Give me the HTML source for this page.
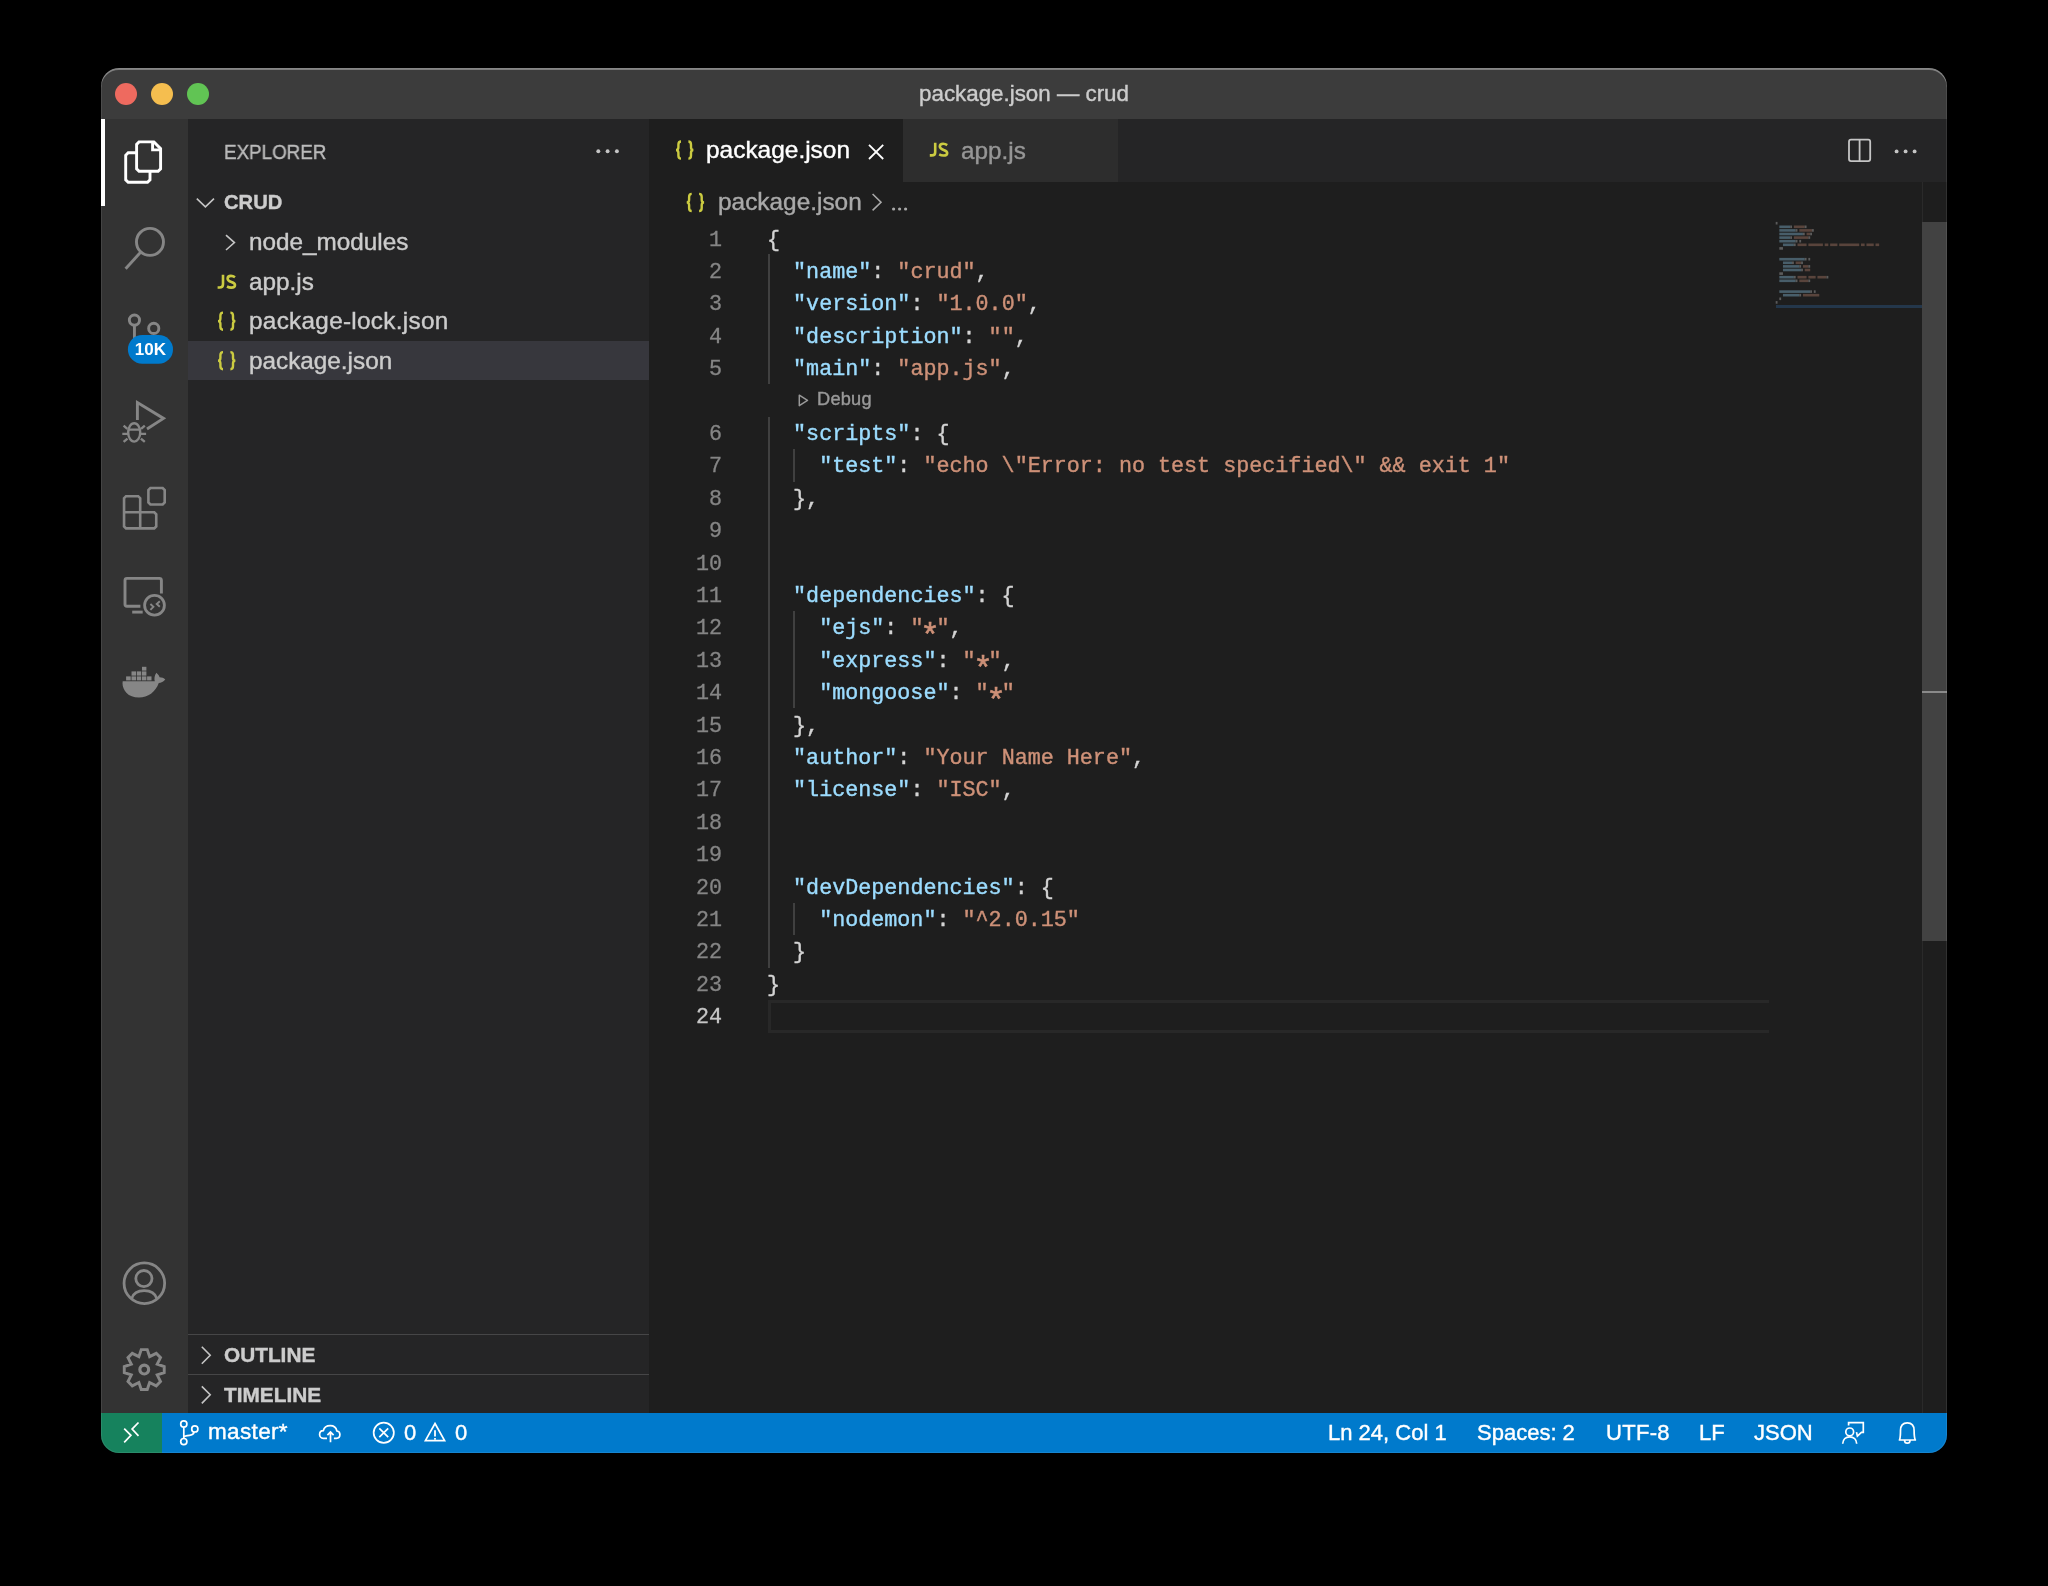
<!DOCTYPE html>
<html><head><meta charset="utf-8">
<style>
html,body{margin:0;padding:0;background:#000;}
body{width:2048px;height:1586px;position:relative;overflow:hidden;font-family:"Liberation Sans",sans-serif;}
#win{position:absolute;left:0;top:0;width:2048px;height:1586px;clip-path:inset(68px 101px 133px 101px round 18px);background:#1e1e1e;}
.a{position:absolute;white-space:pre;will-change:transform;-webkit-text-stroke:0.4px currentColor;}
.r{position:absolute;}
svg.ic{position:absolute;left:0;top:0;width:2048px;height:1586px;overflow:visible;}
.ln{position:absolute;will-change:transform;-webkit-text-stroke:0.3px currentColor;left:622px;width:100px;text-align:right;font-family:"Liberation Mono",monospace;font-size:21.72px;line-height:32.4px;color:#858585;white-space:pre;}
.ln.cur{color:#c6c6c6;}
.cl{position:absolute;will-change:transform;-webkit-text-stroke:0.4px currentColor;left:767.3px;font-family:"Liberation Mono",monospace;font-size:21.72px;line-height:32.4px;color:#d4d4d4;white-space:pre;}
.k{color:#9cdcfe;}
.ast{display:inline-block;width:13.03px;transform-origin:50% 8.7px;transform:translate(0.6px,6px) scale(1.5);}
.s{color:#ce9178;}
.side{font-size:24.3px;line-height:24.3px;color:#cccccc;}
.stat{font-size:22px;line-height:22px;color:#ffffff;}
</style></head>
<body>
<div id="win">
  <!-- title bar -->
  <div class="r" style="left:101px;top:68px;width:1846px;height:51px;background:#3c3c3c;"></div>
  
  <div class="r" style="left:115px;top:83px;width:22px;height:22px;border-radius:50%;background:#ee6a5f;"></div>
  <div class="r" style="left:151px;top:83px;width:22px;height:22px;border-radius:50%;background:#f5be4f;"></div>
  <div class="r" style="left:187px;top:83px;width:22px;height:22px;border-radius:50%;background:#61c454;"></div>
  <div class="a" style="left:0;width:2048px;text-align:center;top:83.0px;font-size:22.35px;line-height:22.35px;color:#cccccc;">package.json — crud</div>

  <!-- activity bar -->
  <div class="r" style="left:101px;top:119px;width:87px;height:1294px;background:#333333;"></div>
  <div class="r" style="left:101px;top:119px;width:4px;height:87px;background:#ffffff;"></div>

  <!-- sidebar -->
  <div class="r" style="left:188px;top:119px;width:461px;height:1294px;background:#252526;"></div>
  <div class="r" style="left:188px;top:340.5px;width:461px;height:39px;background:#37373d;"></div>
  <div class="a" style="left:224.3px;top:141.9px;font-size:20.5px;line-height:20.5px;color:#bbbbbb;transform:scaleX(0.917);transform-origin:0 0;">EXPLORER</div>
  <div class="a" style="left:223.9px;top:191.8px;font-size:20.2px;line-height:20.2px;color:#cccccc;font-weight:bold;">CRUD</div>
  <div class="a side" style="left:249px;top:230.1px;">node_modules</div>
  <div class="a side" style="left:249px;top:269.7px;">app.js</div>
  <div class="a side" style="left:249px;top:309.4px;letter-spacing:0.3px;">package-lock.json</div>
  <div class="a side" style="left:249px;top:348.7px;">package.json</div>
  <div class="r" style="left:188px;top:1333.9px;width:461px;height:1.5px;background:#464647;"></div>
  <div class="r" style="left:188px;top:1373.6px;width:461px;height:1.5px;background:#464647;"></div>
  <div class="a" style="left:223.6px;top:1345.3px;font-size:20.8px;line-height:20.8px;color:#cccccc;font-weight:bold;">OUTLINE</div>
  <div class="a" style="left:224.3px;top:1384.6px;font-size:20.8px;line-height:20.8px;color:#cccccc;font-weight:bold;">TIMELINE</div>

  <!-- editor tab bar -->
  <div class="r" style="left:649px;top:119px;width:1298px;height:63px;background:#252526;"></div>
  <div class="r" style="left:649px;top:119px;width:253.8px;height:63px;background:#1e1e1e;"></div>
  <div class="r" style="left:902.8px;top:119px;width:215px;height:63px;background:#2d2d2d;"></div>
  <div class="a" style="left:706.3px;top:137.9px;font-size:24.45px;line-height:24.45px;color:#ffffff;">package.json</div>
  <div class="a" style="left:961px;top:138.6px;font-size:24.3px;line-height:24.3px;color:#969696;">app.js</div>
  <!-- breadcrumbs -->
  <div class="a" style="left:717.6px;top:190.3px;font-size:24.4px;line-height:24.4px;color:#a9a9a9;">package.json</div>

  <!-- code -->
<div class="ln" style="top:224.5px">1</div>
<div class="cl" style="top:224.5px">{</div>
<div class="ln" style="top:256.9px">2</div>
<div class="cl" style="top:256.9px">  <span class="k">"name"</span>: <span class="s">"crud"</span>,</div>
<div class="ln" style="top:289.3px">3</div>
<div class="cl" style="top:289.3px">  <span class="k">"version"</span>: <span class="s">"1.0.0"</span>,</div>
<div class="ln" style="top:321.7px">4</div>
<div class="cl" style="top:321.7px">  <span class="k">"description"</span>: <span class="s">""</span>,</div>
<div class="ln" style="top:354.1px">5</div>
<div class="cl" style="top:354.1px">  <span class="k">"main"</span>: <span class="s">"app.js"</span>,</div>
<div class="ln" style="top:418.9px">6</div>
<div class="cl" style="top:418.9px">  <span class="k">"scripts"</span>: {</div>
<div class="ln" style="top:451.3px">7</div>
<div class="cl" style="top:451.3px">    <span class="k">"test"</span>: <span class="s">"echo \"Error: no test specified\" &amp;&amp; exit 1"</span></div>
<div class="ln" style="top:483.7px">8</div>
<div class="cl" style="top:483.7px">  },</div>
<div class="ln" style="top:516.1px">9</div>
<div class="ln" style="top:548.5px">10</div>
<div class="ln" style="top:580.9px">11</div>
<div class="cl" style="top:580.9px">  <span class="k">"dependencies"</span>: {</div>
<div class="ln" style="top:613.3px">12</div>
<div class="cl" style="top:613.3px">    <span class="k">"ejs"</span>: <span class="s">"<span class="ast">*</span>"</span>,</div>
<div class="ln" style="top:645.7px">13</div>
<div class="cl" style="top:645.7px">    <span class="k">"express"</span>: <span class="s">"<span class="ast">*</span>"</span>,</div>
<div class="ln" style="top:678.1px">14</div>
<div class="cl" style="top:678.1px">    <span class="k">"mongoose"</span>: <span class="s">"<span class="ast">*</span>"</span></div>
<div class="ln" style="top:710.5px">15</div>
<div class="cl" style="top:710.5px">  },</div>
<div class="ln" style="top:742.9px">16</div>
<div class="cl" style="top:742.9px">  <span class="k">"author"</span>: <span class="s">"Your Name Here"</span>,</div>
<div class="ln" style="top:775.3px">17</div>
<div class="cl" style="top:775.3px">  <span class="k">"license"</span>: <span class="s">"ISC"</span>,</div>
<div class="ln" style="top:807.7px">18</div>
<div class="ln" style="top:840.1px">19</div>
<div class="ln" style="top:872.5px">20</div>
<div class="cl" style="top:872.5px">  <span class="k">"devDependencies"</span>: {</div>
<div class="ln" style="top:904.9px">21</div>
<div class="cl" style="top:904.9px">    <span class="k">"nodemon"</span>: <span class="s">"^2.0.15"</span></div>
<div class="ln" style="top:937.3px">22</div>
<div class="cl" style="top:937.3px">  }</div>
<div class="ln" style="top:969.7px">23</div>
<div class="cl" style="top:969.7px">}</div>
<div class="ln cur" style="top:1002.1px">24</div>

  <div class="a" style="left:817px;top:390.1px;font-size:18.2px;line-height:18.2px;color:#999999;letter-spacing:0.25px;">Debug</div>
  <!-- current line -->
  <div class="r" style="left:768px;top:1000.4px;width:1000.6px;height:32.4px;border:3px solid #282828;border-right:0;box-sizing:border-box;"></div>
  <!-- indent guides -->
  <div class="r" style="left:768px;top:254.2px;width:2px;height:130.3px;background:#404040;"></div>
  <div class="r" style="left:768px;top:416.9px;width:2px;height:550.8px;background:#404040;"></div>
  <div class="r" style="left:793px;top:449.3px;width:2px;height:32.4px;background:#404040;"></div>
  <div class="r" style="left:793px;top:611.3px;width:2px;height:97.2px;background:#404040;"></div>
  <div class="r" style="left:793px;top:902.9px;width:2px;height:32.4px;background:#404040;"></div>

  <!-- minimap -->
  <div class="r" style="left:1775.7px;top:304.8px;width:146.3px;height:3.4px;background:#24374b;"></div>
<svg class="ic" viewBox="0 0 2048 1586" style="opacity:0.34"><rect x="1775.70" y="221.90" width="1.81" height="2.6" fill="#d4d4d4"/><rect x="1779.33" y="225.50" width="10.89" height="2.6" fill="#9cdcfe"/><rect x="1790.22" y="225.50" width="1.81" height="2.6" fill="#d4d4d4"/><rect x="1793.85" y="225.50" width="10.89" height="2.6" fill="#ce9178"/><rect x="1804.74" y="225.50" width="1.81" height="2.6" fill="#d4d4d4"/><rect x="1779.33" y="229.10" width="16.34" height="2.6" fill="#9cdcfe"/><rect x="1795.66" y="229.10" width="1.81" height="2.6" fill="#d4d4d4"/><rect x="1799.30" y="229.10" width="12.71" height="2.6" fill="#ce9178"/><rect x="1812.00" y="229.10" width="1.81" height="2.6" fill="#d4d4d4"/><rect x="1779.33" y="232.70" width="23.59" height="2.6" fill="#9cdcfe"/><rect x="1802.92" y="232.70" width="1.81" height="2.6" fill="#d4d4d4"/><rect x="1806.56" y="232.70" width="3.63" height="2.6" fill="#ce9178"/><rect x="1810.18" y="232.70" width="1.81" height="2.6" fill="#d4d4d4"/><rect x="1779.33" y="236.30" width="10.89" height="2.6" fill="#9cdcfe"/><rect x="1790.22" y="236.30" width="1.81" height="2.6" fill="#d4d4d4"/><rect x="1793.85" y="236.30" width="14.52" height="2.6" fill="#ce9178"/><rect x="1808.37" y="236.30" width="1.81" height="2.6" fill="#d4d4d4"/><rect x="1779.33" y="239.90" width="16.34" height="2.6" fill="#9cdcfe"/><rect x="1795.66" y="239.90" width="1.81" height="2.6" fill="#d4d4d4"/><rect x="1799.30" y="239.90" width="1.81" height="2.6" fill="#d4d4d4"/><rect x="1782.96" y="243.50" width="10.89" height="2.6" fill="#9cdcfe"/><rect x="1793.85" y="243.50" width="1.81" height="2.6" fill="#d4d4d4"/><rect x="1797.48" y="243.50" width="9.07" height="2.6" fill="#ce9178"/><rect x="1808.37" y="243.50" width="14.52" height="2.6" fill="#ce9178"/><rect x="1824.70" y="243.50" width="3.63" height="2.6" fill="#ce9178"/><rect x="1830.15" y="243.50" width="7.26" height="2.6" fill="#ce9178"/><rect x="1839.23" y="243.50" width="19.96" height="2.6" fill="#ce9178"/><rect x="1861.01" y="243.50" width="3.63" height="2.6" fill="#ce9178"/><rect x="1866.45" y="243.50" width="7.26" height="2.6" fill="#ce9178"/><rect x="1875.53" y="243.50" width="3.63" height="2.6" fill="#ce9178"/><rect x="1779.33" y="247.10" width="3.63" height="2.6" fill="#d4d4d4"/><rect x="1779.33" y="257.90" width="25.41" height="2.6" fill="#9cdcfe"/><rect x="1804.74" y="257.90" width="1.81" height="2.6" fill="#d4d4d4"/><rect x="1808.37" y="257.90" width="1.81" height="2.6" fill="#d4d4d4"/><rect x="1782.96" y="261.50" width="9.07" height="2.6" fill="#9cdcfe"/><rect x="1792.04" y="261.50" width="1.81" height="2.6" fill="#d4d4d4"/><rect x="1795.66" y="261.50" width="5.45" height="2.6" fill="#ce9178"/><rect x="1801.11" y="261.50" width="1.81" height="2.6" fill="#d4d4d4"/><rect x="1782.96" y="265.10" width="16.34" height="2.6" fill="#9cdcfe"/><rect x="1799.30" y="265.10" width="1.81" height="2.6" fill="#d4d4d4"/><rect x="1802.92" y="265.10" width="5.45" height="2.6" fill="#ce9178"/><rect x="1808.37" y="265.10" width="1.81" height="2.6" fill="#d4d4d4"/><rect x="1782.96" y="268.70" width="18.15" height="2.6" fill="#9cdcfe"/><rect x="1801.11" y="268.70" width="1.81" height="2.6" fill="#d4d4d4"/><rect x="1804.74" y="268.70" width="5.45" height="2.6" fill="#ce9178"/><rect x="1779.33" y="272.30" width="3.63" height="2.6" fill="#d4d4d4"/><rect x="1779.33" y="275.90" width="14.52" height="2.6" fill="#9cdcfe"/><rect x="1793.85" y="275.90" width="1.81" height="2.6" fill="#d4d4d4"/><rect x="1797.48" y="275.90" width="9.07" height="2.6" fill="#ce9178"/><rect x="1808.37" y="275.90" width="7.26" height="2.6" fill="#ce9178"/><rect x="1817.44" y="275.90" width="9.07" height="2.6" fill="#ce9178"/><rect x="1826.52" y="275.90" width="1.81" height="2.6" fill="#d4d4d4"/><rect x="1779.33" y="279.50" width="16.34" height="2.6" fill="#9cdcfe"/><rect x="1795.66" y="279.50" width="1.81" height="2.6" fill="#d4d4d4"/><rect x="1799.30" y="279.50" width="9.07" height="2.6" fill="#ce9178"/><rect x="1808.37" y="279.50" width="1.81" height="2.6" fill="#d4d4d4"/><rect x="1779.33" y="290.30" width="30.86" height="2.6" fill="#9cdcfe"/><rect x="1810.18" y="290.30" width="1.81" height="2.6" fill="#d4d4d4"/><rect x="1813.82" y="290.30" width="1.81" height="2.6" fill="#d4d4d4"/><rect x="1782.96" y="293.90" width="16.34" height="2.6" fill="#9cdcfe"/><rect x="1799.30" y="293.90" width="1.81" height="2.6" fill="#d4d4d4"/><rect x="1802.92" y="293.90" width="16.34" height="2.6" fill="#ce9178"/><rect x="1779.33" y="297.50" width="1.81" height="2.6" fill="#d4d4d4"/><rect x="1775.70" y="301.10" width="1.81" height="2.6" fill="#d4d4d4"/></svg>

  <!-- scrollbar -->
  <div class="r" style="left:1922px;top:182px;width:25px;height:1231px;background:#1e1e1e;border-left:1px solid #2a2a2a;box-sizing:border-box;"></div>
  <div class="r" style="left:1922px;top:222px;width:25px;height:718.5px;background:#424242;"></div>
  <div class="r" style="left:1922px;top:690.5px;width:25px;height:2.2px;background:#8a8a8a;"></div>

  <!-- status bar -->
  <div class="r" style="left:101px;top:1413px;width:1846px;height:40px;background:#007acc;"></div>
  <div class="r" style="left:101px;top:1413px;width:61px;height:40px;background:#16825d;"></div>
  <div class="a stat" style="left:207.8px;top:1421.2px;font-size:22.5px;letter-spacing:0.35px;">master*</div>
  <div class="a stat" style="left:403.5px;top:1422.1px;">0</div>
  <div class="a stat" style="left:454.9px;top:1422.1px;">0</div>
  <div class="a stat" style="left:1328.1px;top:1422.4px;">Ln 24, Col 1</div>
  <div class="a stat" style="left:1476.6px;top:1422.4px;">Spaces: 2</div>
  <div class="a stat" style="left:1606.0px;top:1422.4px;letter-spacing:0.3px;">UTF-8</div>
  <div class="a stat" style="left:1699.3px;top:1422.4px;">LF</div>
  <div class="a stat" style="left:1753.8px;top:1422.4px;">JSON</div>

  <!-- icons -->
  <svg class="ic" viewBox="0 0 2048 1586" fill="none" stroke-linecap="butt" stroke-linejoin="miter">
    <defs>
      <path id="brace" d="M223,312.6 C220.9,312.6 220.4,313.8 220.4,315.8 V318.4 C220.4,320.2 219.7,321.1 218,321.1 C219.7,321.1 220.4,322 220.4,323.8 V326.6 C220.4,328.6 220.9,329.7 223,329.7 M230.4,312.6 C232.5,312.6 233,313.8 233,315.8 V318.4 C233,320.2 233.7,321.1 235.4,321.1 C233.7,321.1 233,322 233,323.8 V326.6 C233,328.6 232.5,329.7 230.4,329.7" stroke="#cbcb41" stroke-width="2.4" fill="none"/>
      <path id="js" d="M223,274.8 V284.3 C223,286.8 221.6,287.5 219.6,287.5 H217.6 M235,277.2 C233.6,276.2 232.2,275.9 230.9,275.9 C228.6,275.9 227.6,277.2 227.6,278.7 C227.6,280.6 229.4,281.3 231.4,282 C233.7,282.8 235,283.7 235,285 C235,286.8 233.4,287.6 231.2,287.6 C229.7,287.6 228.3,287.2 227,286.5" stroke="#cbcb41" stroke-width="2.6" fill="none"/>
    </defs>
    <!-- explorer files (active, white) -->
    <g stroke="#ffffff" stroke-width="2.9">
      <path d="M139,141.9 H153.9 L160.6,148.6 V168.8 L158.1,171.3 H139.1 L136.6,168.8 V144.4 Z"/>
      <path d="M152.6,141.9 V149.9 H160.6"/>
      <path d="M136.6,152.8 H128.2 L125.7,155.3 V179.8 L128.2,182.3 H147.5 L150,179.8 V171.3"/>
    </g>
    <!-- inactive icons -->
    <g stroke="#868686" stroke-width="2.9">
      <!-- search -->
      <circle cx="149.97" cy="241.9" r="13.5"/>
      <path d="M140.6,252.3 L125.6,268.7"/>
      <!-- source control -->
      <circle cx="134.45" cy="320.1" r="5.1"/>
      <circle cx="153.75" cy="328.4" r="5.1"/>
      <path d="M134.45,325.2 V340"/>
      <!-- run and debug -->
      <path d="M137.4,420 V402.6 L163.5,418.4 L147,429"/>
    </g>
    <g stroke="#868686" stroke-width="2.4">
      <ellipse cx="134.2" cy="432.4" rx="6" ry="9.2"/>
      <path d="M128.3,429.6 H140.1 M122.3,433.9 H128 M140.4,433.9 H146.1 M123.6,425.6 L127.3,428.8 M144.8,425.6 L141.1,428.8 M123.6,441.9 L127.5,438.6 M144.8,441.9 L140.9,438.6"/>
    </g>
    <g stroke="#868686" stroke-width="2.6">
      <!-- extensions -->
      <path d="M126,496.2 H138.2 L140.2,498.2 V512.3 H154.25 L156.25,514.3 V526.4 L154.25,528.4 H126.05 L124.05,526.4 V498.2 Z M124.05,512.3 H140.2 V528.4"/>
      <path d="M150.4,488 H162.7 L164.7,490 V502.5 L162.7,504.5 H150.4 L148.4,502.5 V490 Z"/>
    </g>
    <g stroke="#868686" stroke-width="2.9">
      <!-- remote explorer -->
      <path d="M140.4,606.3 H127 C125.9,606.3 125,605.4 125,604.3 V580.4 C125,579.3 125.9,578.4 127,578.4 H159.4 C160.5,578.4 161.4,579.3 161.4,580.4 V593.4"/>
      <path d="M132.2,612.1 H142.7"/>
      <circle cx="154.5" cy="605.2" r="9.9" stroke-width="2.8"/>
      <path d="M150.4,604 L153.4,606.8 L150.4,609.8 M159.8,601.2 L156.7,604 L159.8,606.8" stroke-width="1.9"/>
      <!-- account -->
      <circle cx="144.35" cy="1283.25" r="20.3" stroke-width="2.8"/>
      <circle cx="143.9" cy="1278.6" r="8.1" stroke-width="2.8"/>
      <path d="M131.6,1298.6 C133.4,1293 138,1290.7 144.2,1290.7 C150.4,1290.7 155,1293 156.8,1298.6" stroke-width="2.8"/>
      <!-- gear -->
      <path d="M141.23,1349.63 L147.27,1349.63 L149.61,1356.67 L156.24,1353.34 L160.51,1357.61 L157.18,1364.24 L164.22,1366.58 L164.22,1372.62 L157.18,1374.96 L160.51,1381.59 L156.24,1385.86 L149.61,1382.53 L147.27,1389.57 L141.23,1389.57 L138.89,1382.53 L132.26,1385.86 L127.99,1381.59 L131.32,1374.96 L124.28,1372.62 L124.28,1366.58 L131.32,1364.24 L127.99,1357.61 L132.26,1353.34 L138.89,1356.67 Z"/>
      <circle cx="144.25" cy="1369.6" r="4.4" stroke-width="3.2"/>
    </g>
    <!-- docker (filled) -->
    <g fill="#868686">
      <rect x="126.1" y="676.4" width="4.6" height="4"/><rect x="131.5" y="676.4" width="4.5" height="4"/><rect x="136.8" y="676.4" width="4.4" height="4"/><rect x="142" y="676.4" width="4.4" height="4"/><rect x="147.1" y="676.4" width="4.4" height="4"/>
      <rect x="131.5" y="671.4" width="4.5" height="4.2"/><rect x="136.8" y="671.4" width="4.4" height="4.2"/><rect x="142" y="671.4" width="4.4" height="4.2"/>
      <rect x="142" y="666.8" width="4.4" height="3.8"/>
      <path d="M122.7,681.3 L154.8,681.3 C154,679 154.5,675 156.4,672.8 C158,674.3 159.3,676 159.6,677.3 C161.6,677.3 164,678 165.3,679.4 C163.5,681.8 161,682.8 158.8,683 C155.5,692 148,697.6 139,697.6 C128,697.6 122.5,690 122.5,683.2 Z"/>
    </g>
    <!-- badge -->
    <rect x="127.9" y="335" width="45.1" height="28.8" rx="14.4" fill="#007acc"/>
    <text x="150.45" y="355.1" fill="#ffffff" font-family="Liberation Sans" font-weight="bold" font-size="17" text-anchor="middle">10K</text>

    <!-- sidebar chevrons & dots -->
    <g stroke="#c5c5c5" stroke-width="1.6">
      <path d="M196.8,198.6 L205.4,206.8 L214,198.6"/>
      <path d="M226,235.2 L234.4,242.6 L226,250"/>
      <path d="M201.8,1346.8 L210.2,1355.2 L201.8,1363.8"/>
      <path d="M201.8,1386.4 L210.2,1394.8 L201.8,1403.4"/>
    </g>
    <g fill="#c5c5c5">
      <circle cx="598.3" cy="151.3" r="1.95"/><circle cx="607.6" cy="151.3" r="1.95"/><circle cx="616.9" cy="151.3" r="1.95"/>
      <circle cx="1896.6" cy="151.4" r="1.95"/><circle cx="1905.6" cy="151.4" r="1.95"/><circle cx="1914.6" cy="151.4" r="1.95"/>
    </g>
    <!-- split editor -->
    <g stroke="#c5c5c5" stroke-width="1.8">
      <rect x="1849" y="139.7" width="21.2" height="21.4" rx="2"/>
      <path d="M1859.6,140 V161"/>
    </g>
    <!-- tab close -->
    <path d="M869,144.8 L883.2,159 M883.2,144.8 L869,159" stroke="#ffffff" stroke-width="1.8"/>
    <!-- breadcrumb chevron and ellipsis -->
    <path d="M872.6,194 L881,202.2 L872.6,210.4" stroke="#a9a9a9" stroke-width="1.6" fill="none"/>
    <g fill="#a9a9a9"><circle cx="893.6" cy="209" r="1.6"/><circle cx="899.6" cy="209" r="1.6"/><circle cx="905.6" cy="209" r="1.6"/></g>
    <!-- debug triangle codelens -->
    <path d="M799.3,395.2 L807.5,400.4 L799.3,405.7 Z" stroke="#999999" stroke-width="1.5" fill="none" stroke-linejoin="round"/>

    <!-- file icons -->
    <use href="#js"/>
    <use href="#js" transform="translate(712.2,-132.1)"/>
    <use href="#brace"/>
    <use href="#brace" transform="translate(0,39.5)"/>
    <use href="#brace" transform="translate(458,-171.1)"/>
    <use href="#brace" transform="translate(468.7,-118.7)"/>

    <!-- status bar icons -->
    <g stroke="#ffffff" stroke-width="1.7" fill="none">
      <path d="M124.2,1428.7 L130.9,1435.3 L124.2,1442.3 M138.5,1422.5 L132.1,1429.1 L138.5,1435.8"/>
      <!-- git branch -->
      <circle cx="183.8" cy="1423.9" r="3.1"/>
      <circle cx="183.8" cy="1441.6" r="3.1"/>
      <circle cx="194.8" cy="1428.9" r="3.1"/>
      <path d="M183.8,1427 V1438.5 M194.2,1432 C193.5,1434.5 192,1435.2 189.5,1435.3 C186.5,1435.4 184.5,1435.8 183.8,1437.2"/>
      <!-- cloud upload -->
      <path d="M327,1438.3 H323.3 C320.9,1438.3 319.6,1436.3 319.6,1434.4 C319.6,1432.3 321.2,1430.8 323.3,1430.7 C324,1427.6 326.8,1425.7 330.3,1425.7 C333.7,1425.7 336.2,1428 336.9,1431 C338.6,1431.2 339.9,1432.6 339.9,1434.6 C339.9,1436.7 338.4,1438.3 336.4,1438.3 H333.9"/>
      <path d="M330.5,1442.3 V1431.8 M327.4,1435.2 L330.5,1432 L333.6,1435.2"/>
      <!-- error -->
      <circle cx="383.75" cy="1432.75" r="10.1"/>
      <path d="M379.3,1428.3 L388.2,1437.2 M388.2,1428.3 L379.3,1437.2"/>
      <!-- warning -->
      <path d="M435,1423.5 L444.6,1440.6 H425.4 Z"/>
      <path d="M435,1430.3 V1436.4 M435,1438 V1439.8" stroke-width="1.8"/>
      <!-- feedback -->
      <path d="M1848.6,1425.5 V1422.7 H1863.3 V1432.4 H1861.4 L1857.4,1436.1 L1856.5,1432.1"/>
      <circle cx="1849.7" cy="1431.9" r="3.9"/>
      <path d="M1842.7,1443.8 C1842.9,1439.5 1845.8,1436.9 1849.7,1436.9 C1853.6,1436.9 1856.5,1439.5 1856.7,1443.8"/>
      <!-- bell -->
      <path d="M1898.7,1440 H1916.1 M1899.6,1440 C1900.5,1437 1900.5,1433 1900.5,1430.5 C1900.5,1425.5 1903.3,1422.8 1907.3,1422.8 C1911.3,1422.8 1914.1,1425.5 1914.1,1430.5 C1914.1,1433 1914.1,1437 1915.2,1440 M1904.6,1440.5 C1904.6,1442.3 1905.8,1443.2 1907.3,1443.2 C1908.8,1443.2 1910,1442.3 1910,1440.5"/>
    </g>
  </svg>
  <div class="r" style="left:101px;top:68px;width:1846px;height:1385px;border-radius:18px;box-shadow:inset 0 0 0 1px rgba(255,255,255,0.085), inset 0 2px 0 rgba(255,255,255,0.33);"></div>
</div>
</body></html>
